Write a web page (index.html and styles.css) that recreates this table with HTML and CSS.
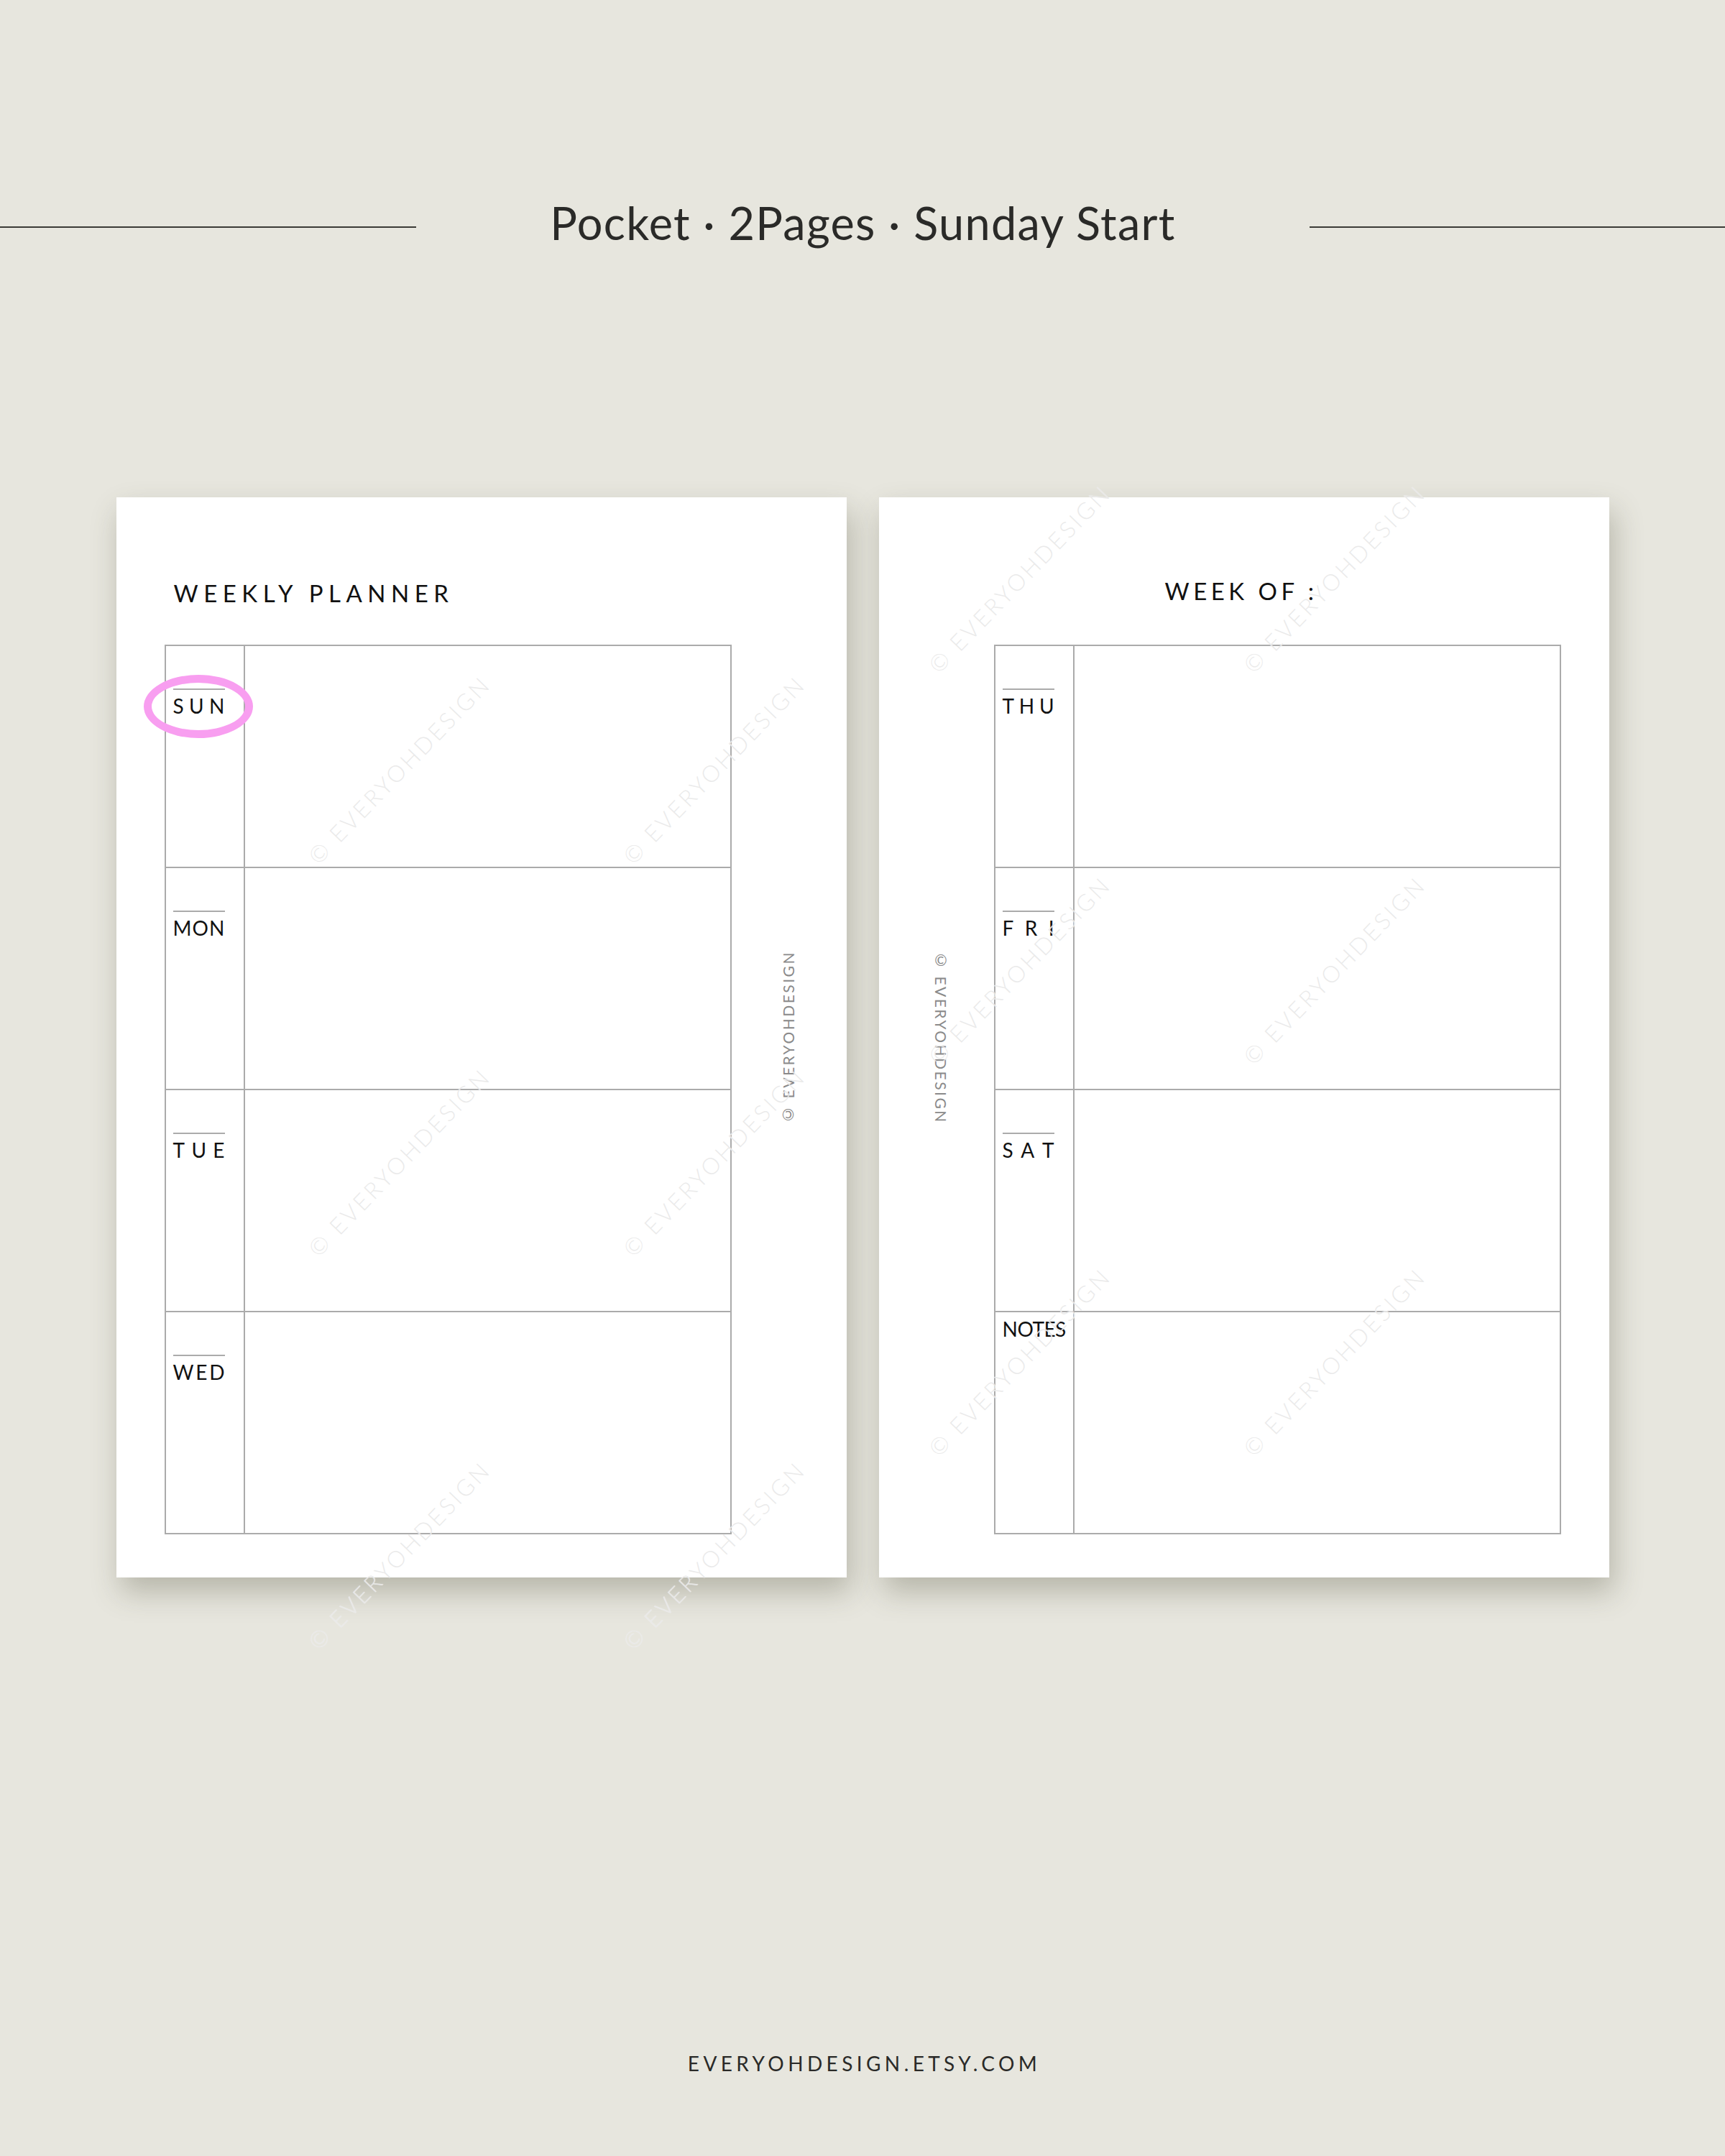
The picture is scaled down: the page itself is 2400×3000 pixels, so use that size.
FILE: index.html
```html
<!DOCTYPE html>
<html lang="en">
<head>
<meta charset="utf-8">
<title>Pocket · 2Pages · Sunday Start</title>
<link rel="stylesheet" href="styles.css">
</head>
<body>
<div class="canvas">
  <header class="title-row">
    <span class="rule"></span>
    <h1 class="title">Pocket · 2Pages · Sunday Start</h1>
    <span class="rule"></span>
  </header>

  <main class="spread">
    <section class="page page-left">
      <div class="main">
        <h2 class="heading">WEEKLY PLANNER</h2>
        <div class="table">
          <div class="row">
            <div class="label">
              <span class="tick"></span>
              <span class="day"><span>S</span><span>U</span><span>N</span></span>
              <span class="circle"></span>
            </div>
            <div class="cell"></div>
          </div>
          <div class="row">
            <div class="label">
              <span class="tick"></span>
              <span class="day"><span>M</span><span>O</span><span>N</span></span>
            </div>
            <div class="cell"></div>
          </div>
          <div class="row">
            <div class="label">
              <span class="tick"></span>
              <span class="day"><span>T</span><span>U</span><span>E</span></span>
            </div>
            <div class="cell"></div>
          </div>
          <div class="row">
            <div class="label">
              <span class="tick"></span>
              <span class="day"><span>W</span><span>E</span><span>D</span></span>
            </div>
            <div class="cell"></div>
          </div>
        </div>
      </div>
      <div class="side side-up">© EVERYOHDESIGN</div>
    </section>

    <section class="page page-right">
      <div class="side side-down">© EVERYOHDESIGN</div>
      <div class="main">
        <h2 class="heading">WEEK OF :</h2>
        <div class="table">
          <div class="row">
            <div class="label">
              <span class="tick"></span>
              <span class="day"><span>T</span><span>H</span><span>U</span></span>
            </div>
            <div class="cell"></div>
          </div>
          <div class="row">
            <div class="label">
              <span class="tick"></span>
              <span class="day"><span>F</span><span>R</span><span>I</span></span>
            </div>
            <div class="cell"></div>
          </div>
          <div class="row">
            <div class="label">
              <span class="tick"></span>
              <span class="day"><span>S</span><span>A</span><span>T</span></span>
            </div>
            <div class="cell"></div>
          </div>
          <div class="row">
            <div class="label label-notes">
              <span class="notes">NOTES</span>
            </div>
            <div class="cell"></div>
          </div>
        </div>
      </div>
    </section>
  </main>

  <footer class="footer">EVERYOHDESIGN.ETSY.COM</footer>

  <div class="watermarks" aria-hidden="true">
    <span class="wm" style="left:555px;top:1071px">© EVERYOHDESIGN</span>
    <span class="wm" style="left:993px;top:1071px">© EVERYOHDESIGN</span>
    <span class="wm" style="left:555px;top:1617px">© EVERYOHDESIGN</span>
    <span class="wm" style="left:993px;top:1617px">© EVERYOHDESIGN</span>
    <span class="wm" style="left:555px;top:2164px">© EVERYOHDESIGN</span>
    <span class="wm" style="left:993px;top:2164px">© EVERYOHDESIGN</span>
    <span class="wm" style="left:1418px;top:805px">© EVERYOHDESIGN</span>
    <span class="wm" style="left:1856px;top:805px">© EVERYOHDESIGN</span>
    <span class="wm" style="left:1418px;top:1350px">© EVERYOHDESIGN</span>
    <span class="wm" style="left:1856px;top:1350px">© EVERYOHDESIGN</span>
    <span class="wm" style="left:1418px;top:1895px">© EVERYOHDESIGN</span>
    <span class="wm" style="left:1856px;top:1895px">© EVERYOHDESIGN</span>
  </div>
</div>
</body>
</html>
```

FILE: styles.css
```css
html, body {
  margin: 0;
  padding: 0;
  background: #e7e6de;
}

.canvas {
  position: relative;
  width: 2400px;
  height: 3000px;
  overflow: hidden;
  background: #e7e6de;
  font-family: "Lato", "Liberation Sans", sans-serif;
}

/* ---------- header ---------- */
.title-row {
  display: grid;
  grid-template-columns: 579px 1fr 578px;
  padding-top: 270px;
  height: 80px;
}

.rule {
  height: 2px;
  margin-top: 45px;
  background: #3b3b36;
}

.title {
  margin: 0;
  text-align: center;
  font-weight: 400;
  font-size: 63px;
  line-height: 80px;
  color: #2a2a28;
  letter-spacing: 1.3px;
}

/* ---------- pages ---------- */
.spread {
  display: flex;
  justify-content: center;
  gap: 45px;
  margin-top: 342px;
}

.page {
  width: 1016px;
  height: 1503px;
  background: #fff;
  display: flex;
  box-shadow: 6px 20px 38px rgba(80, 80, 60, 0.32);
}

.page-left .main {
  padding: 113px 0 0 67px;
}

.page-right .main {
  padding: 110px 0 0 0;
  margin-left: 61px;
}

.heading {
  margin: 0 0 52px;
  font-weight: 400;
  font-size: 33px;
  line-height: 40px;
  letter-spacing: 7.5px;
  color: #111;
}

.page-left .heading {
  padding-left: 13px;
}

.page-right .heading {
  padding-left: 238px;
  margin-bottom: 55px;
  letter-spacing: 5.5px;
}

.table {
  width: 789px;
  box-sizing: border-box;
  border: 2px solid #ababab;
  border-top: none;
}

.row {
  display: flex;
  height: 309px;
  box-sizing: border-box;
  border-top: 2px solid #ababab;
}

.label {
  position: relative;
  width: 110px;
  flex: none;
  box-sizing: border-box;
  border-right: 2px solid #ababab;
  padding: 59px 0 0 10px;
}

.label-notes {
  padding-top: 9px;
}

.cell {
  flex: 1;
}

.tick {
  display: block;
  width: 72px;
  height: 2px;
  background: #ababab;
  margin-bottom: 8px;
}

.day {
  display: flex;
  justify-content: space-between;
  width: 72px;
  font-size: 28px;
  line-height: 28px;
  color: #111;
}

.notes {
  display: block;
  font-size: 28px;
  line-height: 28px;
  color: #111;
  letter-spacing: -0.5px;
}

.circle {
  position: absolute;
  left: -31px;
  top: 40px;
  width: 152px;
  height: 88px;
  box-sizing: border-box;
  border: 11px solid #f89ef0;
  border-radius: 50%;
}

/* vertical copyright */
.side {
  align-self: center;
  writing-mode: vertical-rl;
  font-size: 21px;
  line-height: 26px;
  letter-spacing: 2.5px;
  color: #8a8a8a;
  white-space: nowrap;
}

.side-up {
  transform: rotate(180deg);
  margin-left: 66px;
}

.page-right {
  padding-left: 73px;
  box-sizing: border-box;
}

/* ---------- footer ---------- */
.footer {
  margin-top: 662px;
  text-align: center;
  font-size: 28px;
  line-height: 28px;
  letter-spacing: 5.4px;
  padding-left: 5px;
  color: #2a2a28;
}

/* ---------- watermark overlay ---------- */
.watermarks {
  position: absolute;
  inset: 0;
  pointer-events: none;
}

.wm {
  position: absolute;
  transform: translate(-50%, -50%) rotate(-46deg);
  white-space: nowrap;
  font-size: 32px;
  font-weight: 300;
  letter-spacing: 3.5px;
  color: rgba(232, 232, 232, 0.9);
  text-shadow: 0 0 1px rgba(255, 255, 255, 0.6);
}
```
